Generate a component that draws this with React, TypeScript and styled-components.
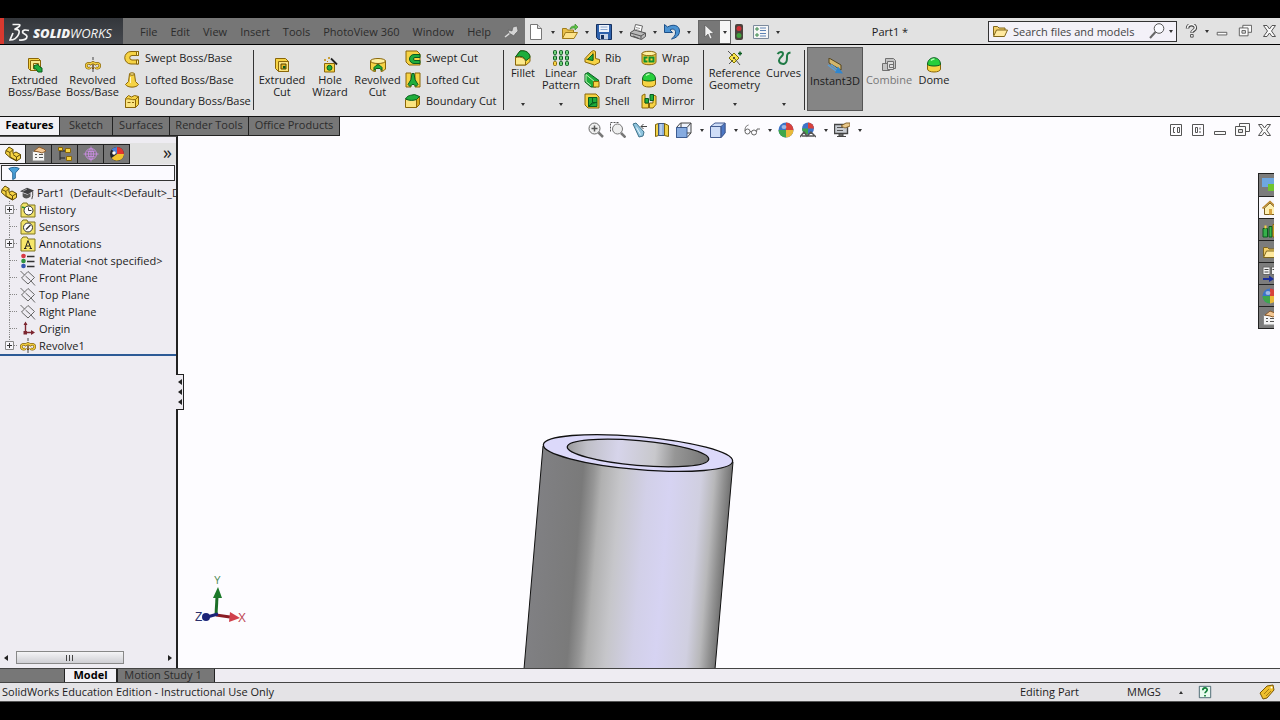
import React from "react";
import styled, { createGlobalStyle } from "styled-components";

const Global = createGlobalStyle`
  * { box-sizing: border-box; }
  body { margin: 0; background: #000; }
  button, input { font: inherit; color: inherit; }
  button { padding: 0; border: 0; background: none; cursor: pointer; }
`;

const GOLD = "#f6d344";
const GOLD_LINE = "#8a6608";
const GREEN = "#1fae3c";
const GREEN_LINE = "#0b5c20";

/* ---------- icons ---------- */

const mirrorStroke = { fill: "none", stroke: "#555", strokeWidth: 1 };

const glyphs: Record<string, React.ReactNode> = {
  extrude: (
    <>
      <path d="M1.500 1.500h10l2 2v10h-10l-2-2z" fill={GOLD} stroke={GOLD_LINE} />
      <path d="M3.500 3.500h10v10h-10z" fill="#fbe88e" stroke={GOLD_LINE} />
      <path d="M6.500 6.500h5v5h-5z" fill="#fff6c0" stroke={GOLD_LINE} />
      <path d="M7 8.500l4-1 2 2.500 2 1v4h-4l-2-3H7z" fill={GREEN} stroke={GREEN_LINE} />
    </>
  ),
  revolve: (
    <>
      <path d="M8 0v16" stroke="#444" strokeDasharray="3 1" />
      <g fill="none">
        <path d="M5.500 10.500a2.500 2.500 0 1 1 0-3.500c1.500-1.500 3.500-1.500 5 0a2.500 2.500 0 1 1 0 3.500" stroke={GOLD_LINE} strokeWidth="2.600" />
        <path d="M5.500 10.500a2.500 2.500 0 1 1 0-3.500c1.500-1.500 3.500-1.500 5 0a2.500 2.500 0 1 1 0 3.500" stroke={GOLD} strokeWidth="1.200" />
        <path d="M8 7v5M6.500 10.500L8 12l1.500-1.500" stroke="#7a4b00" />
      </g>
    </>
  ),
  sweptBoss: (
    <>
      <path d="M14.500 1.500H7a6 6 0 0 0 0 12.500h7.500v-4H8a2 2 0 0 1 0-4.500h6.500z" fill={GOLD} stroke={GOLD_LINE} />
      <path d="M12.500 1.500h2v4h-2zM12.500 10h2v4h-2z" fill="#fff2a8" stroke={GOLD_LINE} />
    </>
  ),
  loftBoss: (
    <>
      <path d="M5.500 2h5l1 7.500 3 3c-2 3.500-11 3.500-13 0l3-3z" fill={GOLD} stroke={GOLD_LINE} />
      <ellipse cx="8" cy="2" rx="2.500" ry="1.200" fill="#fff2a8" stroke={GOLD_LINE} />
      <path d="M6.500 5v6" stroke="#fff6c8" />
    </>
  ),
  boundaryBoss: (
    <>
      <path d="M1.500 5.500l3-3 3 1.500 3-1.500 4 1v8l-3 3h-10z" fill={GOLD} stroke={GOLD_LINE} />
      <path d="M1.500 6.500c3-2 6 1 10 0v8h-10z" fill="#fbe480" stroke={GOLD_LINE} />
      <path d="M11.500 6.500l3-3M3.500 9.500h3M8 9.500h2" stroke={GOLD_LINE} fill="none" />
    </>
  ),
  extrudeCut: (
    <>
      <path d="M1.500 1.500h10l3 3v10h-10l-3-3z" fill={GOLD} stroke={GOLD_LINE} />
      <path d="M4.500 4.500h10v10h-10z" fill="#fbe480" stroke={GOLD_LINE} />
      <path d="M7 7h5v5H7z" fill="#e7bb24" stroke="#5c4400" />
      <path d="M9 9h2.500v2.500H9z" fill={GREEN_LINE} />
    </>
  ),
  holeWizard: (
    <>
      <path d="M2.500 6.500h10v8.500h-10z" fill={GOLD} stroke={GOLD_LINE} />
      <circle cx="7.500" cy="10.800" r="2.500" fill={GREEN} stroke={GREEN_LINE} />
      <path d="M2 3h2M3 2v2M6 1h2M7 0v2M5 4.500h1" stroke="#c08a00" />
      <path d="M9 1.500l6 6" stroke="#222" strokeWidth="1.800" />
    </>
  ),
  revolveCut: (
    <>
      <path d="M.5 4v8c1 1.500 3 2.500 5 2.500V11l1.500-3h2l2 3v3.500c1 0 3.500-1 4.500-2.500V4z" fill={GOLD} stroke={GOLD_LINE} />
      <ellipse cx="8" cy="4" rx="7.500" ry="2.500" fill="#fff0a0" stroke={GOLD_LINE} />
      <path d="M6 8.500c1-1 3-1 4 0l2 2v3l-2-2H6l-2 2v-3z" fill={GREEN} stroke={GREEN_LINE} />
    </>
  ),
  sweptCut: (
    <>
      <path d="M1 1h11l3 3v11H4l-3-3z" fill={GOLD} stroke={GOLD_LINE} />
      <path d="M15 4.500H9a4.500 4.500 0 0 0 0 9h6v-3h-5a1.500 1.500 0 0 1 0-3h5z" fill={GREEN} stroke={GREEN_LINE} />
    </>
  ),
  loftCut: (
    <>
      <path d="M1 1h5v14H1zM10 1h5v14h-5z" fill={GOLD} stroke={GOLD_LINE} />
      <path d="M7 1.500h2l1 6 3 5-2 2-2-2H7l-2 2-2-2 3-5z" fill={GREEN} stroke={GREEN_LINE} />
    </>
  ),
  boundaryCut: (
    <>
      <path d="M.5 6.500h11v8H.5z" fill="#fbe480" stroke={GOLD_LINE} />
      <path d="M11.500 6.500l3-3v8l-3 3z" fill="#d9ab20" stroke={GOLD_LINE} />
      <path d="M.5 6c2-4 5-3.500 9-4.500l5 2-3 3c-3 1-7 1.500-11-.5z" fill={GREEN} stroke={GREEN_LINE} />
    </>
  ),
  fillet: (
    <>
      <path d="M.5 7L5 1c6-1 10 2 10 6.500v4l-4 3.500H.5z" fill={GOLD} stroke={GOLD_LINE} />
      <path d="M.5 7L5 1c6-1 10 2 10 6.500l-4.500 3.500C10 7 6 5.500.5 7z" fill={GREEN} stroke={GREEN_LINE} />
      <path d="M.5 7.500c6-1.500 9.500 1 10 4V15H.5z" fill="#fce98c" stroke={GOLD_LINE} />
    </>
  ),
  pattern: (
    <>
      {[0, 6, 12].map((x) =>
        [0, 5.5, 11].map((y) => (
          <rect key={`${x}-${y}`} x={x + 0.5} y={y + 0.5} width="3" height="4" rx="1"
            fill={x === 0 && y === 11 ? GOLD : "#6fcf78"} stroke={x === 0 && y === 11 ? GOLD_LINE : GREEN_LINE} />
        ))
      )}
    </>
  ),
  rib: (
    <>
      <path d="M7.500 1.500l2-1 2 1v7l4 1v3l-5 2.500-9.500-3V8.500z" fill={GOLD} stroke={GOLD_LINE} />
      <path d="M9 2.500v7.500L2 9" fill="none" stroke={GOLD_LINE} />
      <path d="M3.500 9.500L9 4v6.500z" fill={GREEN} stroke={GREEN_LINE} />
    </>
  ),
  draft: (
    <>
      <path d="M1 2l3-1.500L15 8.500l-3 2v4.500H7l-6-5z" fill={GREEN} stroke={GREEN_LINE} />
      <path d="M2 2.500l9 7.500M2 2.500v7l5 4" stroke="#bff5b5" fill="none" />
      <path d="M9.500 9.500h5.500V15H9.500z" fill={GOLD} stroke={GOLD_LINE} />
    </>
  ),
  shell: (
    <>
      <path d="M1 1h11l3 3v11H4l-3-3z" fill={GOLD} stroke={GOLD_LINE} />
      <path d="M4.500 4.500h8.500v9H4.500z" fill={GREEN} stroke={GREEN_LINE} />
      <path d="M4.500 13.500l4-4h4.500M8.500 9.500v-5" stroke={GREEN_LINE} fill="#0c7c26" />
    </>
  ),
  wrap: (
    <>
      <path d="M1 3.500v9c2 3 12 3 14 0v-9z" fill={GOLD} stroke={GOLD_LINE} />
      <ellipse cx="8" cy="3.500" rx="7" ry="2.200" fill="#fff0a0" stroke={GOLD_LINE} />
      <path d="M6.500 7.500h-3v4h3M12.500 7.500h-4v4h4z" fill="none" stroke="#12912c" strokeWidth="2" />
    </>
  ),
  dome: (
    <>
      <path d="M1.500 7v5c0 4 13 4 13 0V7z" fill={GOLD} stroke={GOLD_LINE} />
      <path d="M1.500 7.500C1.500-1.500 14.500-1.500 14.500 7.500c-2 2-11 2-13 0z" fill="#27cf3c" stroke={GREEN_LINE} />
      <path d="M5 3.500c1-1 2-1.500 3.500-1.500" stroke="#b6ffb4" fill="none" strokeWidth="1.500" />
    </>
  ),
  mirror: (
    <>
      <path d="M1 2.500l3-1.500v9h3.500v5H1zM8.500 10H12V2l3 1v8.500L12 15H8.500z" fill={GOLD} stroke={GOLD_LINE} />
      <path d="M9 1.500h3.500v6H9zM4 5.500h3.500v4.500H4z" fill={GREEN} stroke={GREEN_LINE} />
    </>
  ),
  reference: (
    <>
      <path d="M7 3l5 5-5 5-5-5z" fill="#f8e44c" stroke="#7d7200" />
      <path d="M1 1l5 5M8 9l5 6M2 14l4-4" stroke="#555" />
      <path d="M6 8h2M7 7v2" stroke="#222" />
      <path d="M11 3.500h4M13 1.500v4" stroke={GREEN_LINE} strokeWidth="1.500" />
    </>
  ),
  curves: (
    <path d="M1.500 4c2-3 5.500-2.500 5.500 0S3 7 3 10.500s6 5 7.500 1-1.500-8 4-9" fill="none" stroke="#1f7a45" strokeWidth="2" />
  ),
  instant: (
    <>
      <path d="M2 0l12 7v5L2 5z" fill="#d3b66c" stroke="#54451f" />
      <path d="M1 7l8 6M4 6.500l8 6" stroke="#5aa0d8" strokeWidth="1.500" />
      <path d="M11 8.500l5 7-8-.5z" fill="#2f86d0" />
    </>
  ),
  combine: (
    <g fill="#c4c4c4" stroke="#707070">
      <path d="M4.500 1.500h8l2 2v8h-8l-2-2z" />
      <path d="M1.500 6.500h7v7h-7z" />
      <path d="M6.500 4.500h6v8h-6zM8.500 7.500h4v3h-4z" fill="#dedede" />
    </g>
  ),
  newDoc: (
    <>
      <path d="M2.500.5h7l4 4v11h-11z" fill="#fff" stroke="#777" />
      <path d="M9.500.5v4h4" fill="#ddd" stroke="#777" />
    </>
  ),
  open: (
    <>
      <path d="M.5 14.500v-10h4l1 1.500h6v3" fill="#e9c04a" stroke="#a07c1c" />
      <path d="M.5 14.500l3-6h12l-3.500 6z" fill="#fde38a" stroke="#a07c1c" />
      <path d="M8 5c1-3 3-3 5-3V0l3 3-3 3V4c-2 0-3 0-5 1z" fill="#5fc648" stroke="#2d7c22" strokeWidth=".6" />
    </>
  ),
  save: (
    <>
      <path d="M.5.5h15v15h-13l-2-2z" fill="#2f62ac" stroke="#16315f" />
      <path d="M3 1h10v7H3z" fill="#eef3fb" />
      <path d="M4.500 3h7M4.500 5.500h7" stroke="#8aa6cf" />
      <path d="M4 10h8v5.500H4z" fill="#c9d4e6" />
      <path d="M5 11h3v4H5z" fill="#16315f" />
    </>
  ),
  print: (
    <>
      <path d="M4 7l1.500-6.500 7 1.500L11 8z" fill="#fff" stroke="#666" />
      <path d="M.5 8.500l4-2.500 11 3v3.500l-4 3-11-3.500z" fill="#b9b9b9" stroke="#555" />
      <path d="M.5 9l10.500 3 4.500-3M11 12v3M3 12l6 2.500" stroke="#555" fill="none" />
      <path d="M6 3.500l4 1M5.500 5.500l4 1" stroke="#999" />
    </>
  ),
  undo: (
    <path d="M.5.500v8h8L6 6c3-2 6-.5 5.500 3 0 2-1.500 4-4 6 5-1 8-4 8-8 0-5.500-6-7.500-12-4z" fill="#4b93d2" stroke="#1c4f88" />
  ),
  cursor: <path d="M4 1v12l3-3 2 5 2-1-2-4.500h4z" fill="#f2f2f2" stroke="#555" strokeWidth=".6" />,
  traffic: (
    <>
      <rect x="4" y="0" width="8" height="16" rx="2" fill="#4a423c" />
      <circle cx="8" cy="4.500" r="2.500" fill="#cf3036" />
      <circle cx="8" cy="11.500" r="2.500" fill="#3f9f3a" />
    </>
  ),
  options: (
    <>
      <path d="M.5 1.500h15v13H.5z" fill="#f7f7f7" stroke="#7c8a9c" />
      <path d="M3 4h2v2H3zM3 10h2v2H3z" fill="none" stroke="#3c8a4c" />
      <path d="M7 4h6M7 6.500h6M7 9.500h6M7 12h6" stroke="#5e83b5" />
    </>
  ),
  folder: (
    <>
      <path d="M1.500 12.500v-9h4l1.500 1.500h6v2" fill="#f3cf6b" stroke="#80661c" />
      <path d="M1.500 13.500l3-6.500h11l-3 6.500z" fill="#ffe9a0" stroke="#80661c" />
    </>
  ),
  search: (
    <>
      <circle cx="10" cy="5.500" r="4.800" fill="#fafaff" stroke="#555" />
      <path d="M6.500 9L1 15" stroke="#666" strokeWidth="2" />
    </>
  ),
  help: (
    <>
      <path d="M4 5c0-5.500 9-5.500 9-.5 0 3-4 3-4 5.500" fill="none" stroke="#444" strokeWidth="4" />
      <path d="M4 4.800c0-5.500 9-5.500 9-.5 0 3-4 3-4 5" fill="none" stroke="#f4f4f4" strokeWidth="1.800" />
      <path d="M7.500 12h3v3h-3z" fill="#f4f4f4" stroke="#444" />
    </>
  ),
  minimize: <path d="M2.500 9.500h11v3h-11z" fill="#fafafa" stroke="#555" />,
  restore: (
    <>
      <path d="M5.500 1.500h10v8h-10z" fill="#fafafa" stroke="#555" />
      <path d="M1.500 4.500h10v9h-10z" fill="#fafafa" stroke="#555" />
      <path d="M4.500 7.500h4v3h-4z" fill="#ddd" stroke="#555" />
    </>
  ),
  close: (
    <path d="M2.500 2.500h3.500l2.500 3.500 2.500-3.500h3.500L10.500 8l4 5.500H11L8.500 10 6 13.500H2.500L6.500 8z" fill="#fafafa" stroke="#555" />
  ),
  paneLeft: (
    <>
      <path d="M2.500 2.500h11v11h-11z" {...mirrorStroke} />
      <path d="M7 5.500H5.500v5H7M9.500 5.500h2v5h-2z" {...mirrorStroke} />
    </>
  ),
  paneRight: (
    <>
      <path d="M2.500 2.500h11v11h-11z" {...mirrorStroke} />
      <path d="M5.500 5.500h2v5h-2zM10 5.500v2M10 9v2" {...mirrorStroke} />
    </>
  ),
  zoomFit: (
    <>
      <circle cx="6.500" cy="6.500" r="5.500" fill="#eee" stroke="#666" />
      <path d="M6.500 3.500v6M3.500 6.500h6" stroke="#555" strokeWidth="1.500" />
      <path d="M10.500 10.500l4.500 4.500" stroke="#777" strokeWidth="2.500" />
    </>
  ),
  zoomArea: (
    <>
      <path d="M.5 9.500v-9h9" fill="none" stroke="#555" strokeDasharray="2 1" />
      <circle cx="7.500" cy="7" r="5" fill="#eee" stroke="#777" />
      <path d="M11 11l4.500 4.500" stroke="#777" strokeWidth="2.500" />
    </>
  ),
  prevView: (
    <>
      <path d="M1 2l3-1 8 9-1 4-4 1z" fill="#8fc4de" stroke="#3f7189" />
      <path d="M4.500 5.500l4 7" stroke="#e8f8ff" />
      <path d="M9 4.500h6M11.500 2L9 4.500 11.500 7" fill="none" stroke="#444" />
    </>
  ),
  section: (
    <>
      <path d="M1.500 2.500l3-1v12l-3 1z" fill="#f1d24a" stroke="#7d6208" />
      <path d="M4.500 1.500h6v12h-6z" fill="#8fb0dc" stroke="#3b557f" />
      <path d="M10.500 1.500l4 2v11l-4-1z" fill="#f1d24a" stroke="#7d6208" />
      <path d="M7 2v11" stroke="#dce9fa" />
    </>
  ),
  orient: (
    <>
      <path d="M.5 5.500l4-4.500H15v10l-4 4.500H.5z" fill="#eef2fb" stroke="#444" />
      <path d="M.5 5.500H11v10H.5z" fill="#86abe0" stroke="#3c5c92" />
      <path d="M11 5.500L15 1M5 1v4.500M11 11h4" stroke="#444" />
    </>
  ),
  display: (
    <>
      <path d="M.5 4.500L5 1h10v10l-4 4.500H.5z" fill="#cfddf7" stroke="#445d92" />
      <path d="M11 4.500L15 1v10l-4 4.500z" fill="#4c77c4" stroke="#445d92" />
      <path d="M.5 4.500H11v11" fill="none" stroke="#445d92" />
    </>
  ),
  hideShow: (
    <g fill="none" stroke="#666">
      <circle cx="3.500" cy="9.500" r="2.500" />
      <circle cx="10" cy="10.500" r="2.500" />
      <path d="M6 9.500l2 .5M1 9c0-4 1-5 3.500-6M12.500 10l.5-3h3" />
    </g>
  ),
  appearance: (
    <>
      <circle cx="8" cy="8" r="7.500" fill="#3d74c8" />
      <path d="M8 8V.5A7.500 7.500 0 0 1 15.500 8z" fill="#d8423c" />
      <path d="M8 8h7.500A7.500 7.500 0 0 1 8 15.500z" fill="#e9b93a" />
      <path d="M8 8v7.500A7.500 7.500 0 0 1 .5 8z" fill="#3fa64b" />
      <ellipse cx="6" cy="5" rx="2.500" ry="2" fill="#fff" opacity=".5" />
    </>
  ),
  scene: (
    <>
      <circle cx="8" cy="6.500" r="6" fill="#3d74c8" />
      <path d="M8 6.500v-6a6 6 0 0 1 6 6z" fill="#d8423c" />
      <path d="M2 6.500h6v6a6 6 0 0 1-6-6z" fill="#3fa64b" />
      <path d="M0 15l4-5 3 4 4-4 5 5M2 14h12" fill="none" stroke="#555" strokeWidth="1.500" />
    </>
  ),
  viewSettings: (
    <>
      <path d="M.5 2.500h13v9H.5z" fill="#c8ccd2" stroke="#444" strokeWidth="1.400" />
      <path d="M3 5.500h6M3 8.500h6" stroke="#555" />
      <path d="M5 12h4v2H5zM3 14.500h9" fill="#888" stroke="#444" />
      <path d="M7 4l5-3h4v3l-5 2z" fill="#e9c88a" stroke="#8c6b32" />
    </>
  ),
  part: (
    <>
      <path d="M1 4.500L4 1l4 2.500v4l3-1.500 4.500 2.500v4L11.500 15 5 11.500.5 7.500z" fill={GOLD} stroke="#5f4a06" />
      <path d="M1 4.500l4 2 3-3M5 6.500V11l6.500 3.500V11l4-2.500M11.500 11L8 8.500" fill="none" stroke="#5f4a06" />
    </>
  ),
  property: (
    <>
      <path d="M1.500 5.500h12v9.500h-12z" fill="#f4f4f4" stroke="#888" />
      <path d="M4 8h2v1H4zM4 11h2v1H4zM8 8h4v1H8zM8 11h4v1H8z" fill="#555" />
      <path d="M3 5l5-4 5 2 2 2-4 2-3-1z" fill="#f3c793" stroke="#8a5a2b" />
    </>
  ),
  config: (
    <>
      <path d="M3 1v13M3 5h5M3 12h5" stroke="#222" fill="none" />
      <path d="M8.500 2.500h5v4h-5zM9.500 10.500h5v4h-5z" fill={GOLD} stroke={GOLD_LINE} />
      <path d="M1.500 1.500h4v3h-4z" fill={GOLD} stroke={GOLD_LINE} />
    </>
  ),
  dimX: (
    <g fill="none" stroke="#c58bdc">
      <circle cx="8" cy="8" r="5.500" />
      <path d="M8 .5v15M.5 8h15M4.500 5.500h7M4.500 10.500h7" />
      <ellipse cx="8" cy="8" rx="2.500" ry="5.500" />
    </g>
  ),
  ball: (
    <>
      <circle cx="8" cy="8" r="7" fill="#24242c" />
      <path d="M8 8L2.500 3.500A7 7 0 0 1 8 1z" fill="#4c7ed8" />
      <path d="M8 8V1a7 7 0 0 1 7 7z" fill="#e2352f" />
      <path d="M8 8h7a7 7 0 0 1-12.500 4z" fill="#f2c22e" />
      <circle cx="5" cy="7" r="1.800" fill="#fff" />
    </>
  ),
  funnel: <path d="M2 3c3-2 10-2 12 0L9.500 8v6l-3 1.500V8z" fill="#4aa0d8" stroke="#1f5f8f" />,
  cap: (
    <>
      <path d="M0 6l8-4 8 3-7 4.500z" fill="#3f3f42" />
      <path d="M3 8v4c2 3 6 3 9 0V8L8.500 10z" fill="#555" />
      <path d="M14.500 6v5l-1 4" stroke="#333" fill="none" />
      <path d="M3 6l5-2.500" stroke="#aaa" />
    </>
  ),
  history: (
    <>
      <path d="M1 3.500l2-2.500h4l1 2h7v12H1z" fill="#f1e36a" stroke="#7e7420" />
      <circle cx="8.500" cy="8.500" r="4.500" fill="#fff" stroke="#333" />
      <path d="M8.500 5.500v3h3" fill="none" stroke="#333" />
      <path d="M2 5l3 1" stroke="#2c8b36" strokeWidth="1.500" />
    </>
  ),
  sensors: (
    <>
      <path d="M1 3.500l2-2.500h4l1 2h7v12H1z" fill="#f1e36a" stroke="#7e7420" />
      <circle cx="8" cy="8.500" r="4.500" fill="#fff" stroke="#333" />
      <path d="M6 10.500l4.500-4.500" stroke="#333" strokeWidth="1.500" />
    </>
  ),
  annotations: (
    <>
      <path d="M1 3.500l2-2.500h4l1 2h7v12H1z" fill="#f7e76a" stroke="#7e7420" />
      <path d="M5 12.500l3-8 3 8M6 10h4M4 12.500h2.500M9.500 12.500H12" fill="none" stroke="#222" />
    </>
  ),
  material: (
    <>
      <circle cx="3.500" cy="3" r="2.300" fill="#d83a44" />
      <circle cx="3.500" cy="8" r="2.300" fill="#2f9440" />
      <circle cx="3.500" cy="13" r="2.300" fill="#3657b0" />
      <path d="M7 3.500h7.500M7 8.500h7.500M7 13.500h7.500" stroke="#333" strokeWidth="1.500" />
    </>
  ),
  plane: (
    <>
      <path d="M8 1.500l6.500 6L8 14 1.500 8z" fill="none" stroke="#666" />
      <path d="M.5 1l4 4M5.500 6l5 4.500M11 11l4 4.500" stroke="#666" />
    </>
  ),
  origin: (
    <>
      <path d="M5.500 2v9.500H13" fill="none" stroke="#7c2630" strokeWidth="1.400" />
      <path d="M3.500 4l2-3.500 2 3.500zM11 9l4 2.500-4 2.500zM3.500 10h3.500v3.500H3.500z" fill="#7c2630" />
    </>
  ),
  tag: (
    <>
      <path d="M1 9l7-7 6-1 1 5-7 8-4 1z" fill="#efbf2c" stroke="#7c5806" />
      <path d="M5 10l5-5M7 12l5-5" stroke="#a97d12" />
      <circle cx="12.500" cy="3.500" r="1" fill="#fff" />
    </>
  ),
  statusHelp: (
    <>
      <path d="M1.500 1.500h13v13h-13z" fill="#e8fbef" stroke="#3d5a66" />
      <path d="M5.500 6c0-3.500 5-3.500 5-.5 0 2-2.500 2-2.500 4M8 11.500v1.500" fill="none" stroke="#13803a" strokeWidth="2" />
    </>
  ),
  pin: (
    <>
      <path d="M1 13l5-4" stroke="#ddd" strokeWidth="1.500" />
      <path d="M4 6l4 1 1-4 4-1 1 5-3 3-1 2-5-3z" fill="#d4d4d4" stroke="#555" strokeWidth=".6" />
    </>
  ),
  forum: (
    <>
      <path d="M0 1h12v9H0z" fill="#6ea7e0" />
      <path d="M6 7h10v7H6z" fill="#6fc430" />
    </>
  ),
  home: (
    <>
      <path d="M2.500 8v6.500h11V8L8 3z" fill="#fdf0b4" stroke="#7a5c1c" />
      <path d="M.5 8.500L8 1.500l7.500 7" fill="none" stroke="#b9862a" strokeWidth="1.600" />
      <path d="M7 9h3v5.500H7z" fill="#d9a441" />
    </>
  ),
  library: (
    <>
      <path d="M1 6.500h4.500V15H1zM7 4.500h3V15H7z" fill="#36b14a" stroke="#0d5a1e" />
      <path d="M11 2.500h4V15h-4z" fill={GOLD} stroke={GOLD_LINE} />
      <path d="M2.500 3.500h2v3h-2z" fill={GOLD} />
    </>
  ),
  palette: (
    <>
      <path d="M1 1h7v7.500H1zM9.500 1H16v7.500H9.500z" fill="#f4f4f4" stroke="#666" />
      <path d="M2.500 3.500h4M2.500 6h4M10.500 3.500h4" stroke="#444" />
      <path d="M1 12h6V9.500l5 3.500-5 3v-2H1z" fill="#1c2f9c" />
    </>
  ),
};

const Svg = styled.svg<{ $size: number }>`
  display: block;
  flex: none;
  width: ${(p) => p.$size}px;
  height: ${(p) => p.$size}px;
`;

const Icon = ({ name, size = 16 }: { name: string; size?: number }) => (
  <Svg $size={size} viewBox="0 0 16 16" aria-hidden="true">{glyphs[name]}</Svg>
);

const Caret = styled.span<{ $up?: boolean }>`
  display: block;
  flex: none;
  width: 0;
  height: 0;
  border: 2px solid transparent;
  border-top: ${(p) => (p.$up ? "0" : "3px solid #333")};
  border-bottom: ${(p) => (p.$up ? "3px solid #333" : "0")};
`;

/* ---------- frame ---------- */

const Frame = styled.div`
  display: flex;
  flex-direction: column;
  min-height: 100vh;
  padding: 18px 0;
  overflow: hidden;
  background: #000;
  color: #1c1c1c;
  font: 11px/12px "Open Sans", "Noto Sans", sans-serif;
  white-space: nowrap;
`;

const TitleBar = styled.header`
  display: flex;
  align-items: stretch;
  height: 27px;
  background: #e2e2e2;
  border-bottom: 1px solid #000;
`;

const Brand = styled.div`
  display: flex;
  align-items: center;
  gap: 3px;
  width: 123px;
  padding: 4px 0 0 5px;
  border-left: 4px solid #d8392f;
  background: linear-gradient(#34373c, #45484e);
  color: #f4f4f4;
  font-size: 13px;
  font-style: italic;
`;

const Wordmark = styled.span`
  font-weight: 400;
  b { font-weight: 800; }
`;

const MenuBar = styled.nav`
  display: flex;
  align-items: center;
  justify-content: space-between;
  width: 402px;
  padding: 2px 5px 0 17px;
  background: #767676;
  color: #2c2c2c;
`;

const QuickTools = styled.div`
  display: flex;
  align-items: center;
  padding: 2px 0 0 3px;
`;

const QuickButton = styled.button<{ $wide?: boolean }>`
  display: flex;
  align-items: center;
  gap: 7px;
  width: ${(p) => (p.$wide ? 34 : 22)}px;
`;

const SelectTool = styled.div`
  display: flex;
  align-self: stretch;
  width: 33px;
  border: 1px solid #666;
  button:first-child { width: 21px; padding-left: 2px; background: #777; }
  button:last-child { display: grid; place-items: center; width: 10px; background: #f6f6f6; }
  button { display: flex; align-items: center; }
`;

const DocTitle = styled.div`
  flex: 1;
  padding: 8px 0 0 5px;
  text-align: center;
`;

const SearchBox = styled.label`
  display: flex;
  align-items: center;
  align-self: center;
  gap: 4px;
  width: 189px;
  height: 21px;
  padding: 0 3px;
  border: 1px solid #333;
  background: #f3f1f8;
  input {
    flex: 1;
    min-width: 0;
    height: 18px;
    padding: 0 1px;
    border: 0;
    outline: 0;
    background: transparent;
  }
  input::placeholder { color: #444; opacity: 1; }
`;

const WindowTools = styled.div`
  display: flex;
  align-items: center;
  gap: 9px;
  width: 103px;
  padding-left: 7px;
  overflow: hidden;
`;

/* ---------- ribbon ---------- */

const Ribbon = styled.section`
  display: flex;
  height: 72px;
  padding: 2px 0 0 6px;
  background: #e2e2e2;
  border-bottom: 1px solid #111;
`;

const Divider = styled.span`
  flex: none;
  width: 1px;
  height: 60px;
  margin: 3px 2px 0 0;
  background: #333;
`;

const BigButton = styled.button<{ $w: number; $menu?: boolean; $state?: "on" | "off" }>`
  display: flex;
  flex: none;
  flex-direction: column;
  align-items: center;
  gap: 1px;
  width: ${(p) => p.$w}px;
  height: 64px;
  padding-top: ${(p) => (p.$menu ? 3 : 10)}px;
  text-align: center;
  color: ${(p) => (p.$state === "off" ? "#777" : "#1c1c1c")};
  background: ${(p) => (p.$state === "on" ? "#858585" : "none")};
  border: ${(p) => (p.$state === "on" ? "1px solid #555" : "0")};
  ${Caret} { margin: auto 0 5px; }
`;

const Label = styled.span`
  white-space: pre-line;
`;

const ToolList = styled.div<{ $w: number }>`
  display: flex;
  flex: none;
  flex-direction: column;
  justify-content: space-between;
  width: ${(p) => p.$w}px;
  height: 59px;
  margin: 3px 0 0 2px;
`;

const SmallButton = styled.button`
  display: flex;
  align-items: center;
  gap: 5px;
`;

/* ---------- workspace ---------- */

const Workspace = styled.main`
  display: flex;
  flex: 1;
  flex-direction: column;
  background: #fdfcff;
`;

const CommandRow = styled.div`
  display: flex;
  height: 19px;
`;

const CommandTabs = styled.div`
  display: flex;
  width: 340px;
  border-bottom: 1px solid #222;
`;

const CommandTab = styled.button<{ $w: number; $active?: boolean }>`
  flex: none;
  width: ${(p) => p.$w}px;
  height: 18px;
  padding-bottom: 2px;
  border-right: 1px solid #222;
  background: ${(p) => (p.$active ? "#f2f1f5" : "#777")};
  color: ${(p) => (p.$active ? "#000" : "#2c2c2c")};
  font-weight: ${(p) => (p.$active ? 700 : 400)};
`;

const HeadsUp = styled.div`
  display: flex;
  align-items: center;
  flex: 1;
  gap: 6px;
  height: 26px;
  padding-left: 248px;
`;

const HeadsUpButton = styled.button`
  display: flex;
  align-items: center;
  gap: 8px;
`;

const DocControls = styled.div`
  display: flex;
  align-items: center;
  gap: 6px;
  height: 26px;
  width: 112px;
  overflow: hidden;
`;

const Split = styled.div`
  display: flex;
  flex: 1;
`;

const SidePanel = styled.aside`
  position: relative;
  display: flex;
  flex: none;
  flex-direction: column;
  width: 178px;
  padding-top: 6px;
  border-top: 1px solid #555;
  border-right: 2px solid #222;
  background: #eeecf2;
`;

const PanelTabs = styled.div`
  display: flex;
  align-items: center;
  height: 21px;
  background: #e2e2e2;
`;

const PanelTab = styled.button<{ $active?: boolean }>`
  display: grid;
  place-items: center;
  width: 26px;
  height: 20px;
  border: solid #222;
  border-width: 1px 1px 1px 0;
  background: ${(p) => (p.$active ? "#f6f5fa" : "#777")};
`;

const More = styled.button`
  margin-left: auto;
  padding: 0 4px 4px;
  font-size: 18px;
`;

const Filter = styled.label`
  display: flex;
  align-items: center;
  height: 16px;
  margin: 1px 1px 3px;
  padding-left: 5px;
  border: 1px solid #333;
  background: #fbfaff;
  input { flex: 1; min-width: 0; height: 12px; padding: 0 4px; border: 0; outline: 0; background: none; }
`;

const Tree = styled.ul`
  flex: 1;
  margin: 0;
  padding: 0;
  list-style: none;
  overflow: hidden;
`;

const TreeRow = styled.li<{ $root?: boolean; $last?: boolean }>`
  display: flex;
  align-items: center;
  gap: 3px;
  height: ${(p) => (p.$last ? 19 : 17)}px;
  padding-left: ${(p) => (p.$root ? 1 : 0)}px;
  border-bottom: ${(p) => (p.$last ? "2px solid #2c5a96" : "0")};
`;

const BranchSvg = styled.svg`
  flex: none;
  width: 17px;
  height: 17px;
`;

const Branch = ({ box, last }: { box?: boolean; last?: boolean }) => (
  <BranchSvg viewBox="0 0 17 17" aria-hidden="true">
    <path d={last ? "M9.500 0v9" : "M9.500 0v17"} stroke="#888" strokeDasharray="1 1" />
    <path d="M10 8.500h7" stroke="#888" strokeDasharray="1 1" />
    {box && (
      <>
        <path d="M5.500 4.500h8v8h-8z" fill="#f6f5fa" stroke="#888" />
        <path d="M7 8.500h5M9.500 6v5" stroke="#333" />
      </>
    )}
  </BranchSvg>
);

const PanelScroll = styled.div`
  display: flex;
  align-items: center;
  justify-content: space-between;
  height: 15px;
  margin-bottom: 3px;
  padding: 0 4px;
  button { display: block; }
`;

const Thumb = styled.button`
  width: 108px;
  height: 13px;
  margin-right: auto;
  margin-left: 8px;
  border: 1px solid #888;
  background: linear-gradient(#f4f4f6, #cfcfd4);
`;

const ThumbGrip = styled.span`
  display: block;
  width: 8px;
  height: 6px;
  margin: 0 auto;
  background: repeating-linear-gradient(90deg, #444 0 1px, transparent 1px 3px);
`;

const Flyout = styled.button`
  position: absolute;
  top: 237px;
  right: -8px;
  display: flex;
  flex-direction: column;
  align-items: center;
  justify-content: space-evenly;
  width: 8px;
  height: 36px;
  border: 1px solid #222;
  border-left: 0;
  background: #eeecf2;
`;

const Arrow = styled.span<{ $right?: boolean }>`
  display: block;
  width: 0;
  height: 0;
  border: 3px solid transparent;
  border-left: ${(p) => (p.$right ? "4px solid #222" : "0")};
  border-right: ${(p) => (p.$right ? "0" : "4px solid #222")};
`;

const Viewport = styled.section`
  position: relative;
  flex: 1;
  overflow: hidden;
`;

const Model = styled.svg`
  position: absolute;
  bottom: 0;
  left: 342px;
  width: 220px;
  height: 238px;
`;

const Triad = styled.svg`
  position: absolute;
  bottom: 42px;
  left: 16px;
  width: 54px;
  height: 52px;
  font: 12px "Liberation Sans", sans-serif;
`;

const TaskPane = styled.div`
  position: absolute;
  top: 37px;
  right: 6px;
  width: 16px;
  border: solid #222;
  border-width: 1px 0 1px 1px;
`;

const TaskButton = styled.button<{ $active?: boolean }>`
  display: flex;
  align-items: center;
  width: 15px;
  height: 22px;
  padding-left: 3px;
  overflow: hidden;
  background: ${(p) => (p.$active ? "#f6f5fa" : "#7c7c7c")};
  & + & { border-top: 1px solid #222; }
`;

/* ---------- bottom ---------- */

const StudyTabs = styled.div`
  display: flex;
  height: 15px;
  border: solid #444;
  border-width: 1px 0;
  background: #eeecf2;
`;

const TabNav = styled.span`
  width: 64px;
  background: #777;
`;

const StudyTab = styled.button<{ $w: number; $active?: boolean }>`
  width: ${(p) => p.$w}px;
  padding: 0 6px 2px 0;
  border: solid #222;
  border-width: 0 1px;
  line-height: 11px;
  background: ${(p) => (p.$active ? "#f2f1f5" : "#777")};
  color: ${(p) => (p.$active ? "#000" : "#2c2c2c")};
  font-weight: ${(p) => (p.$active ? 700 : 400)};
  &:nth-child(2) { padding-right: 0; }
`;

const StatusBar = styled.footer`
  display: flex;
  align-items: center;
  height: 19px;
  padding: 0 5px 0 2px;
  background: #e4e3e6;
  border-bottom: 1px solid #555;
`;

const StatusText = styled.span<{ $w?: number }>`
  flex: ${(p) => (p.$w ? "none" : 1)};
  width: ${(p) => (p.$w ? `${p.$w}px` : "auto")};
`;

const StatusButton = styled.button<{ $w: number }>`
  width: ${(p) => p.$w}px;
`;

/* ---------- data ---------- */

const menus = ["File", "Edit", "View", "Insert", "Tools", "PhotoView 360", "Window", "Help"];
const bossTools = [["sweptBoss", "Swept Boss/Base"], ["loftBoss", "Lofted Boss/Base"], ["boundaryBoss", "Boundary Boss/Base"]];
const cutTools = [["sweptCut", "Swept Cut"], ["loftCut", "Lofted Cut"], ["boundaryCut", "Boundary Cut"]];
const ribTools = [["rib", "Rib"], ["draft", "Draft"], ["shell", "Shell"]];
const wrapTools = [["wrap", "Wrap"], ["dome", "Dome"], ["mirror", "Mirror"]];

const commandTabs: [string, number][] = [
  ["Features", 60], ["Sketch", 53], ["Surfaces", 57], ["Render Tools", 79], ["Office Products", 91],
];

const headsUp: [string, boolean][] = [
  ["zoomFit", false], ["zoomArea", false], ["prevView", false], ["section", false], ["orient", true],
  ["display", true], ["hideShow", true], ["appearance", false], ["scene", true], ["viewSettings", true],
];

const tree: [string, string, boolean][] = [
  ["history", "History", true], ["sensors", "Sensors", false], ["annotations", "Annotations", true],
  ["material", "Material <not specified>", false], ["plane", "Front Plane", false], ["plane", "Top Plane", false],
  ["plane", "Right Plane", false], ["origin", "Origin", false], ["revolve", "Revolve1", true],
];

const Tools = ({ items, w }: { items: string[][]; w: number }) => (
  <ToolList $w={w}>
    {items.map(([icon, text]) => (
      <SmallButton key={text}><Icon name={icon} />{text}</SmallButton>
    ))}
  </ToolList>
);

const Big = ({ icon, text, w, menu, state }: { icon: string; text: string; w: number; menu?: boolean; state?: "on" | "off" }) => (
  <BigButton $w={w} $menu={menu} $state={state}>
    <Icon name={icon} />
    <Label>{text}</Label>
    {menu && <Caret />}
  </BigButton>
);

export default function App() {
  return (
    <Frame>
      <Global />
      <TitleBar>
        <Brand>
          <svg width="21" height="20" viewBox="0 0 21 20" fill="none" stroke="#f4f4f4" strokeWidth="1.700" aria-hidden="true">
            <path d="M3.500 1.500h6c2 0 1.500 1.500 0 2.500L5.500 6.500c4.500-.5 5.500 1.500 4 5-1.500 3.500-4 5.500-8.500 5.500l3-7" />
            <path d="M20 7.500c-4-1-6.500-.5-6.500 1.500s4.500 2 4.500 4.500-3 4-8 3.500" />
          </svg>
          <Wordmark><b>SOLID</b>WORKS</Wordmark>
        </Brand>
        <MenuBar>
          {menus.map((m) => <button key={m}>{m}</button>)}
          <button aria-label="Pin menu"><Icon name="pin" /></button>
        </MenuBar>
        <QuickTools>
          {["newDoc", "open", "save", "print", "undo"].map((n) => (
            <QuickButton key={n} $wide aria-label={n}><Icon name={n} /><Caret /></QuickButton>
          ))}
          <SelectTool>
            <button aria-label="Select"><Icon name="cursor" /></button>
            <button aria-label="Select options"><Caret /></button>
          </SelectTool>
          <QuickButton aria-label="Rebuild"><Icon name="traffic" /></QuickButton>
          <QuickButton $wide aria-label="Options"><Icon name="options" /><Caret /></QuickButton>
        </QuickTools>
        <DocTitle>Part1 *</DocTitle>
        <SearchBox>
          <Icon name="folder" />
          <input placeholder="Search files and models" aria-label="Search files and models" />
          <Icon name="search" />
          <Caret />
        </SearchBox>
        <WindowTools>
          <QuickButton aria-label="Help"><Icon name="help" size={14} /><Caret /></QuickButton>
          {["minimize", "restore", "close"].map((n) => (
            <button key={n} aria-label={n}><Icon name={n} size={n === "close" ? 16 : 14} /></button>
          ))}
        </WindowTools>
      </TitleBar>

      <Ribbon>
        <Big icon="extrude" text={"Extruded\nBoss/Base"} w={57} />
        <Big icon="revolve" text={"Revolved\nBoss/Base"} w={59} />
        <Tools items={bossTools} w={129} />
        <Divider />
        <Big icon="extrudeCut" text={"Extruded\nCut"} w={52} />
        <Big icon="holeWizard" text={"Hole\nWizard"} w={44} />
        <Big icon="revolveCut" text={"Revolved\nCut"} w={51} />
        <Tools items={cutTools} w={98} />
        <Divider />
        <Big icon="fillet" text="Fillet" w={34} menu />
        <Big icon="pattern" text={"Linear\nPattern"} w={42} menu />
        <Tools items={ribTools} w={55} />
        <Tools items={wrapTools} w={62} />
        <Divider />
        <Big icon="reference" text={"Reference\nGeometry"} w={57} menu />
        <Big icon="curves" text="Curves" w={41} menu />
        <Divider />
        <Big icon="instant" text="Instant3D" w={56} state="on" />
        <Big icon="combine" text="Combine" w={52} state="off" />
        <Big icon="dome" text="Dome" w={38} />
      </Ribbon>

      <Workspace>
        <CommandRow>
          <CommandTabs>
            {commandTabs.map(([t, w], i) => <CommandTab key={t} $w={w} $active={i === 0}>{t}</CommandTab>)}
          </CommandTabs>
          <HeadsUp>
            {headsUp.map(([n, menu]) => (
              <HeadsUpButton key={n} aria-label={n}><Icon name={n} />{menu && <Caret />}</HeadsUpButton>
            ))}
          </HeadsUp>
          <DocControls>
            {["paneLeft", "paneRight", "minimize", "restore", "close", "paneLeft"].map((n, i) => (
              <button key={i} aria-label={n}><Icon name={n} /></button>
            ))}
          </DocControls>
        </CommandRow>

        <Split>
          <SidePanel>
            <PanelTabs>
              {["part", "property", "config", "dimX", "ball"].map((n, i) => (
                <PanelTab key={n} $active={i === 0} aria-label={n}><Icon name={n} /></PanelTab>
              ))}
              <More aria-label="More tabs">»</More>
            </PanelTabs>
            <Filter>
              <Icon name="funnel" size={14} />
              <input aria-label="Filter tree" />
            </Filter>
            <Tree>
              <TreeRow $root>
                <Icon name="part" />
                <Icon name="cap" size={14} />
                <span>Part1&nbsp; (Default&lt;&lt;Default&gt;_D</span>
              </TreeRow>
              {tree.map(([icon, text, box], i) => (
                <TreeRow key={text} $last={i === tree.length - 1}>
                  <Branch box={box} last={i === tree.length - 1} />
                  <Icon name={icon} />
                  <span>{text}</span>
                </TreeRow>
              ))}
            </Tree>
            <PanelScroll>
              <button aria-label="Scroll left"><Arrow /></button>
              <Thumb aria-label="Scroll"><ThumbGrip /></Thumb>
              <button aria-label="Scroll right"><Arrow $right /></button>
            </PanelScroll>
            <Flyout aria-label="Collapse panel"><Arrow /><Arrow /><Arrow /></Flyout>
          </SidePanel>

          <Viewport>
            <Model viewBox="0 0 220 238" aria-label="Revolved tube">
              <defs>
                <linearGradient id="wall" gradientUnits="userSpaceOnUse" x1="23" y1="17" x2="213" y2="33">
                  <stop offset="0" stopColor="#808083" />
                  <stop offset=".22" stopColor="#7a7a7a" />
                  <stop offset=".28" stopColor="#969696" />
                  <stop offset=".32" stopColor="#b0b0b0" />
                  <stop offset=".42" stopColor="#c6c6ca" />
                  <stop offset=".56" stopColor="#d2d0e8" />
                  <stop offset=".68" stopColor="#d6d3f2" />
                  <stop offset=".84" stopColor="#d0cfe0" />
                  <stop offset=".91" stopColor="#b8b8ba" />
                  <stop offset=".96" stopColor="#909090" />
                  <stop offset="1" stopColor="#727272" />
                </linearGradient>
                <linearGradient id="bore" x1="0" x2="1">
                  <stop offset="0" stopColor="#9a9a9c" />
                  <stop offset=".14" stopColor="#c0c0c8" />
                  <stop offset=".36" stopColor="#d6d4ea" />
                  <stop offset=".62" stopColor="#c8c8cc" />
                  <stop offset=".76" stopColor="#969696" />
                  <stop offset="1" stopColor="#757575" />
                </linearGradient>
              </defs>
              <path d="M23 16L4 239h191L213 32z" fill="url(#wall)" stroke="#111" />
              <ellipse cx="118" cy="23" rx="95" ry="16.500" transform="rotate(5 118 23)" fill="#dcd9fa" stroke="#111" strokeWidth="1.300" />
              <ellipse cx="118" cy="23" rx="71" ry="12.500" transform="rotate(5 118 23)" fill="url(#bore)" stroke="#111" strokeWidth="1.300" />
            </Model>
            <Triad viewBox="0 0 54 52" aria-label="Orientation axes">
              <path d="M22 41l1-18" stroke="#1c6e28" strokeWidth="3" />
              <path d="M19 24l5-11 4 11z" fill="#1c7a2a" />
              <path d="M22 41l14 2" stroke="#8a1c24" strokeWidth="3" />
              <path d="M36 38l10 6-11 4z" fill="#d0404c" />
              <path d="M24 40l-11 3" stroke="#1b2478" strokeWidth="3" />
              <circle cx="12" cy="43" r="4" fill="#1b2478" />
              <text x="20" y="10" fill="#4d8a55" fontSize="10">Y</text>
              <text x="44" y="48" fill="#c04a58">X</text>
              <text x="1" y="47" fill="#2b2f6a">Z</text>
            </Triad>
            <TaskPane>
              {["forum", "home", "library", "folder", "palette", "appearance", "property"].map((n) => (
                <TaskButton key={n} $active={n === "home"} aria-label={n}><Icon name={n} /></TaskButton>
              ))}
            </TaskPane>
          </Viewport>
        </Split>
      </Workspace>

      <StudyTabs>
        <TabNav />
        <StudyTab $w={53} $active>Model</StudyTab>
        <StudyTab $w={98}>Motion Study 1</StudyTab>
      </StudyTabs>
      <StatusBar>
        <StatusText>SolidWorks Education Edition - Instructional Use Only</StatusText>
        <StatusText $w={107}>Editing Part</StatusText>
        <StatusText $w={52}>MMGS</StatusText>
        <StatusButton $w={19} aria-label="Units"><Caret $up /></StatusButton>
        <StatusButton $w={61} aria-label="Quick tips"><Icon name="statusHelp" size={14} /></StatusButton>
        <StatusButton $w={16} aria-label="Tags"><Icon name="tag" /></StatusButton>
      </StatusBar>
    </Frame>
  );
}
